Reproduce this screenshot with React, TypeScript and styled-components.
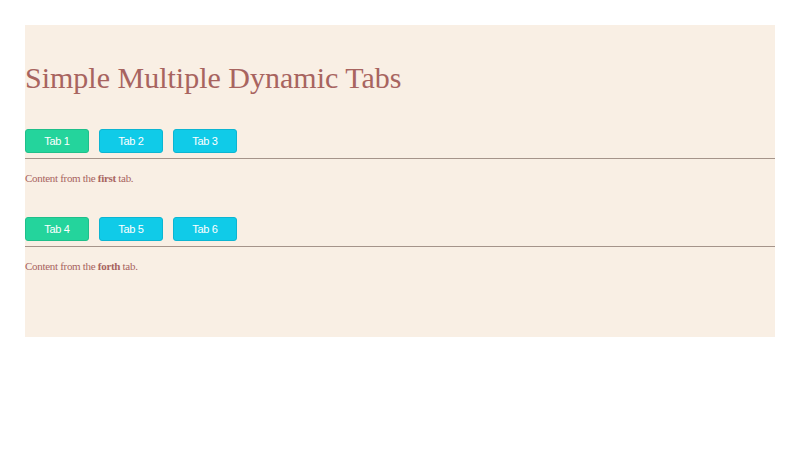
import React, { useState } from "react";
import styled, { createGlobalStyle } from "styled-components";

const Global = createGlobalStyle`
  html, body { margin: 0; padding: 0; background: #ffffff; }
  body { font-family: "Liberation Serif", serif; }
`;

const Page = styled.div`
  margin: 25px;
  width: 750px;
  height: 312px;
  background: #f9efe4;
  color: #a8645f;
  display: flex;
  flex-direction: column;
`;

const Title = styled.h1`
  margin: 36px 0 34px 0;
  font-family: "Liberation Serif", serif;
  font-weight: normal;
  font-size: 30px;
  line-height: 34px;
  color: #a8645f;
`;

const TabGroup = styled.div`
  display: flex;
  flex-direction: column;
  margin-bottom: 32px;
`;

const TabBar = styled.div`
  display: flex;
  gap: 10px;
  padding-bottom: 5px;
  border-bottom: 1px solid #a5948a;
`;

const TabButton = styled.button<{ $active: boolean }>`
  width: 64px;
  height: 24px;
  padding: 0;
  border-radius: 3px;
  border: 1px solid ${(p) => (p.$active ? "#1fbf8a" : "#0cb5d2")};
  background: ${(p) => (p.$active ? "#24d49c" : "#10cbe8")};
  color: #ffffff;
  font-family: "Liberation Sans", Arial, sans-serif;
  font-size: 11px;
  letter-spacing: -0.3px;
  cursor: pointer;
`;

const Content = styled.p`
  margin: 12px 0 0 0;
  font-size: 11px;
  line-height: 14px;
  letter-spacing: -0.3px;
  color: #a8645f;
`;

type Tab = { label: string; content: string };

function Tabs({ tabs }: { tabs: Tab[] }) {
  const [active, setActive] = useState(0);
  return (
    <TabGroup>
      <TabBar>
        {tabs.map((t, i) => (
          <TabButton key={t.label} $active={i === active} onClick={() => setActive(i)}>
            {t.label}
          </TabButton>
        ))}
      </TabBar>
      <Content>
        Content from the <b>{tabs[active].content}</b> tab.
      </Content>
    </TabGroup>
  );
}

export default function App() {
  return (
    <>
      <Global />
      <Page>
        <Title>Simple Multiple Dynamic Tabs</Title>
        <Tabs
          tabs={[
            { label: "Tab 1", content: "first" },
            { label: "Tab 2", content: "second" },
            { label: "Tab 3", content: "third" },
          ]}
        />
        <Tabs
          tabs={[
            { label: "Tab 4", content: "forth" },
            { label: "Tab 5", content: "fifth" },
            { label: "Tab 6", content: "sixth" },
          ]}
        />
      </Page>
    </>
  );
}
